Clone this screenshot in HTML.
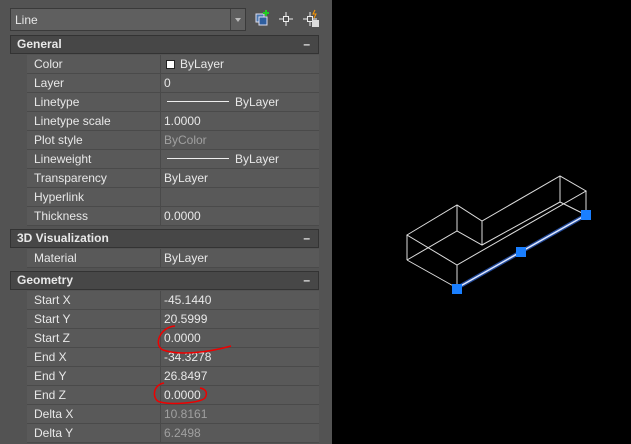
<!DOCTYPE html>
<html><head><style>
*{margin:0;padding:0;box-sizing:border-box}
body{width:631px;height:444px;background:#000;position:relative;overflow:hidden;font-family:"Liberation Sans",sans-serif;font-size:12px;color:#e8e8e8}
#panel{position:absolute;left:0;top:0;width:332px;height:444px;background:#535353}
#dd{position:absolute;left:10px;top:8px;width:236px;height:23px;background:#5f5f5f;border:1px solid #3a3a3a}
#dd span{position:absolute;left:4px;top:4px;font-size:12px}
#dd i{position:absolute;right:0;top:0;width:15px;height:21px;border-left:1px solid #3f3f3f}
#dd i:after{content:"";position:absolute;left:4px;top:9px;border:3px solid transparent;border-top:4px solid #bbb}
.hdr{position:absolute;left:10px;width:309px;height:19px;background:#474747;border:1px solid #333;font-weight:bold;padding-left:6px;line-height:17px}
.hdr b{position:absolute;right:8px;top:0;font-weight:bold}
.row{position:absolute;left:27px;width:292px;height:19px;background:#595959;border-bottom:1px solid #4a4a4a;line-height:18px}
.row .l{position:absolute;left:7px}
.row .v{position:absolute;left:133px;top:0;height:19px;border-left:1px solid #4a4a4a;padding-left:3px;width:159px}
.ind{position:absolute;left:10px;width:17px;background:#535353}
.g{color:#a0a0a0}
</style></head><body>
<div id="panel">
<div id="dd"><span>Line</span><i></i></div>
<svg style="position:absolute;left:252px;top:8px" width="75" height="22">
<rect x="4" y="6" width="8" height="8" fill="#4a78b0" stroke="#dde" stroke-width="1"/>
<rect x="7" y="9" width="8" height="8" fill="#2f5fa0" stroke="#dde" stroke-width="1"/>
<path d="M14 2v6M11 5h6" stroke="#2c2" stroke-width="2"/>
<path d="M34 4v14M27 11h14" stroke="#eee"/><rect x="31.5" y="8.5" width="5" height="5" fill="#535353" stroke="#eee"/>
<path d="M58 4v14M51 11h14" stroke="#eee"/><rect x="55.5" y="8.5" width="5" height="5" fill="#535353" stroke="#eee"/>
<rect x="60" y="12" width="7" height="7" fill="#ddd"/><path d="M63 2l-2 4h3l-2 4" stroke="#f90" fill="none"/>
</svg>
<div class="hdr" style="top:35px">General<b>–</b></div>
<div class="ind" style="top:55px;height:171px"></div>
<div class="row" style="top:55px"><span class="l">Color</span><span class="v"><span style="display:inline-block;width:9px;height:9px;background:#fff;border:1px solid #222;margin:0 5px -1px 2px"></span>ByLayer</span></div>
<div class="row" style="top:74px"><span class="l">Layer</span><span class="v">0</span></div>
<div class="row" style="top:93px"><span class="l">Linetype</span><span class="v"><span style="display:inline-block;width:62px;border-top:1px solid #eee;margin:0 6px 4px 3px"></span>ByLayer</span></div>
<div class="row" style="top:112px"><span class="l">Linetype scale</span><span class="v">1.0000</span></div>
<div class="row" style="top:131px"><span class="l">Plot style</span><span class="v g">ByColor</span></div>
<div class="row" style="top:150px"><span class="l">Lineweight</span><span class="v"><span style="display:inline-block;width:62px;border-top:1px solid #eee;margin:0 6px 4px 3px"></span>ByLayer</span></div>
<div class="row" style="top:169px"><span class="l">Transparency</span><span class="v">ByLayer</span></div>
<div class="row" style="top:188px"><span class="l">Hyperlink</span><span class="v"></span></div>
<div class="row" style="top:207px"><span class="l">Thickness</span><span class="v">0.0000</span></div>
<div class="hdr" style="top:229px">3D Visualization<b>–</b></div>
<div class="row" style="top:249px"><span class="l">Material</span><span class="v">ByLayer</span></div>
<div class="hdr" style="top:271px">Geometry<b>–</b></div>
<div class="row" style="top:291px"><span class="l">Start X</span><span class="v">-45.1440</span></div>
<div class="row" style="top:310px"><span class="l">Start Y</span><span class="v">20.5999</span></div>
<div class="row" style="top:329px"><span class="l">Start Z</span><span class="v">0.0000</span></div>
<div class="row" style="top:348px"><span class="l">End X</span><span class="v">-34.3278</span></div>
<div class="row" style="top:367px"><span class="l">End Y</span><span class="v">26.8497</span></div>
<div class="row" style="top:386px"><span class="l">End Z</span><span class="v">0.0000</span></div>
<div class="row" style="top:405px"><span class="l">Delta X</span><span class="v g">10.8161</span></div>
<div class="row" style="top:424px"><span class="l">Delta Y</span><span class="v g">6.2498</span></div>
<svg style="position:absolute;left:0;top:0" width="332" height="444">
<path d="M175 326C160 327 153 345 163 350C180 356 210 352 231 346" stroke="#e00" stroke-width="1.5" fill="none"/>
<path d="M164 383C152 385 152 400 160 402C172 405 200 403 205 398C208 393 206 389 200 388" stroke="#e00" stroke-width="1.5" fill="none"/>
</svg>
</div>
<svg style="position:absolute;left:332px;top:0" width="299" height="444">
<g transform="translate(-332,0)" stroke="#ddd" stroke-width="1" fill="none">
<path d="M407 235L457 205L482 221L560 176L586 191L457 265Z"/>
<path d="M407 235V260M457 205V231M482 221V245M560 176V202M586 191V215M457 265V288"/>
<path d="M407 260L457 288M407 260L457 231L482 245L560 202L586 215"/>
<path d="M457 288L586 215" stroke="#3a7bff" stroke-width="4" opacity=".6"/>
<path d="M457 288L586 215" stroke="#dfe8ff" stroke-width="1.5"/>
</g>
<g fill="#1a7fff" transform="translate(-332,0)">
<rect x="452" y="284" width="10" height="10"/><rect x="516" y="247" width="10" height="10"/><rect x="581" y="210" width="10" height="10"/>
</g>
</svg>
</body></html>
